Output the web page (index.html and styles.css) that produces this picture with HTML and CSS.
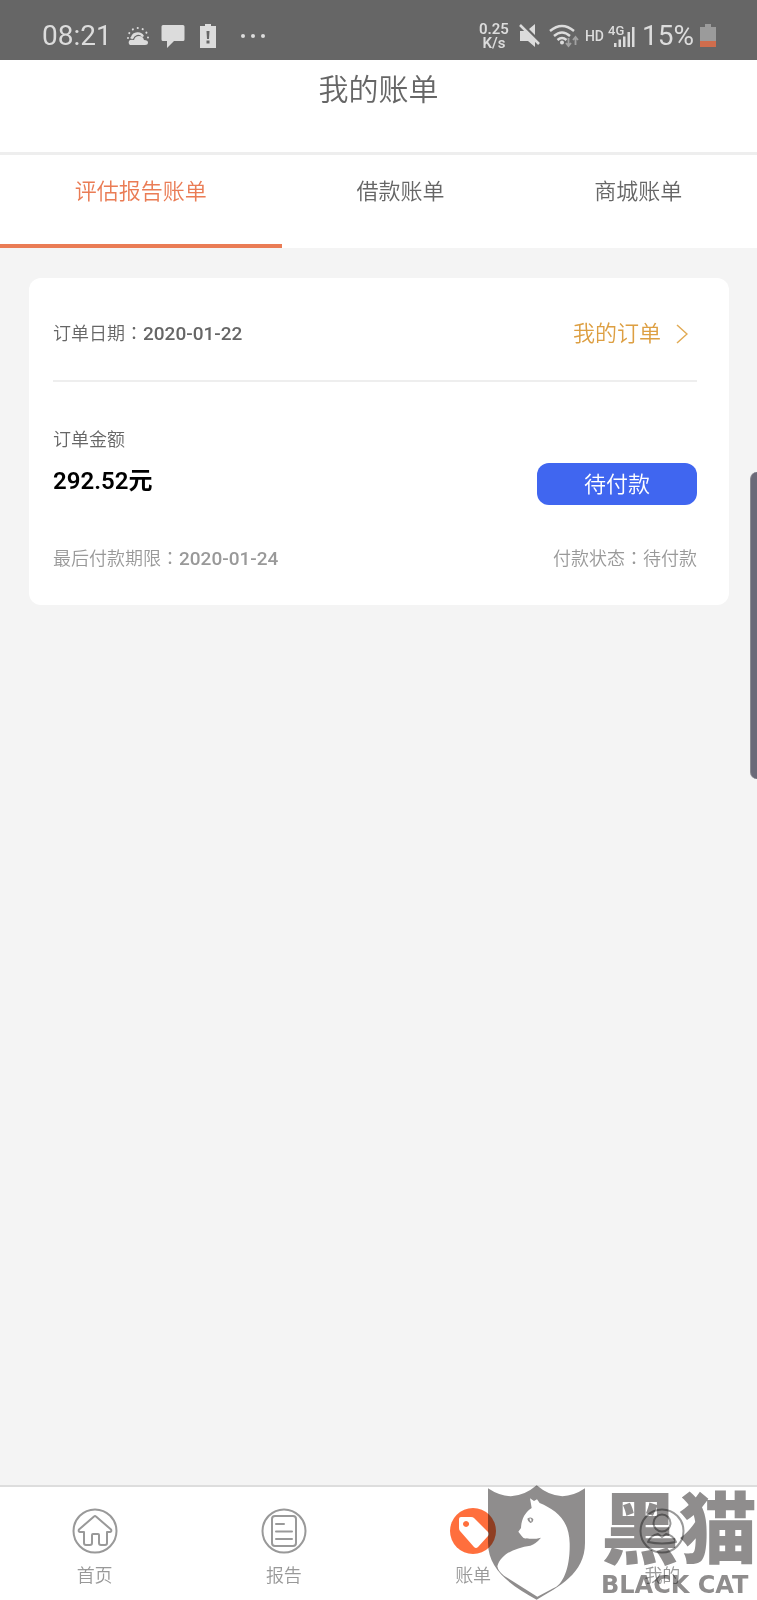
FILE: index.html
```html
<!DOCTYPE html>
<html lang="zh-CN">
<head>
    <meta charset="utf-8">
    <meta name="viewport" content="width=device-width, initial-scale=1">
    <title>我的账单</title>
    <link rel="stylesheet" href="styles.css">
</head>
<body>
    <div class="statusBar">
        <div class="statusLeft">
            <span class="clock">08:21</span>
            <svg class="weatherIcon" width="24" height="24" viewBox="0 0 24 24">
                <path fill="none" stroke="#dcdcdc" stroke-width="2" stroke-linecap="round" stroke-dasharray="0.1 5" d="M2 14a10 10 0 0 1 20 0"/>
                <path fill="#dcdcdc" d="M5 13a7 6.500 0 0 1 13-1q-1 1-2 1q-2-3-5-2t-4 4q-2 0-3-1z"/>
                <path fill="#dcdcdc" d="M4 21a3 3 0 0 1 0-5q2-.5 4 0q1-4 5-4t5 4q4 0 4 2.500t-3 2.500z"/>
            </svg>
            <svg class="chatIcon" width="24" height="24" viewBox="0 0 24 24">
                <path fill="#dcdcdc" d="M2 1h20q1.500 0 1.500 1.500v13q0 1.500-1.500 1.500h-9l-7 7v-7h-4q-1.500 0-1.500-1.500v-13q0-1.500 1.500-1.500z"/>
            </svg>
            <svg class="alertIcon" width="16" height="24" viewBox="0 0 16 24">
                <path fill="#dcdcdc" d="M5 0h6v2h5v22h-16v-22h5z"/>
                <path fill="#666" d="M6.500 7h3l-.5 8h-2zM6.500 16.500h3v3h-3z"/>
            </svg>
            <svg class="dotsIcon" width="26" height="6" viewBox="0 0 26 6">
                <g fill="#dcdcdc"><circle cx="3" cy="3" r="2"/><circle cx="13" cy="3" r="2"/><circle cx="23" cy="3" r="2"/></g>
            </svg>
        </div>
        <div class="statusRight">
            <span class="speed">0.25<br>K/s</span>
            <svg class="muteIcon" width="22" height="24" viewBox="0 0 22 24">
                <path fill="#dcdcdc" d="M1 7h5l10 10v6l-7-6h-8zM10 5l6-5v11z"/>
                <path stroke="#dcdcdc" stroke-width="2.500" d="M1 1l19 19"/>
            </svg>
            <svg class="wifiIcon" width="30" height="24" viewBox="0 0 30 24">
                <g fill="none" stroke="#dcdcdc" stroke-width="2.400">
                    <path d="M1 7q12-10 24 0M5 12q8-7 16 0M8.500 16q4.500-4 9 0"/>
                </g>
                <circle cx="13" cy="18.500" r="2" fill="#dcdcdc"/>
                <path fill="none" stroke="#a2a2a2" stroke-width="1.800" d="M19.500 14v8M17 19l2.500 3l2.500-3M26.500 21v-8M24 16l2.500-3l2.500 3"/>
            </svg>
            <span class="hd">HD</span>
            <svg class="signalIcon" width="28" height="24" viewBox="0 0 28 24">
                <path fill="#dcdcdc" d="M6 19h2.500v4h-2.500zM10.500 15.500h2.500v7.500h-2.500zM15 12.500h2.500v10.500h-2.500zM19.500 8h2.500v15h-2.500zM24 3h2.500v20h-2.500z"/>
                <text class="signalText" x="0" y="11">4G</text>
            </svg>
            <span class="percent">15%</span>
            <svg class="batteryIcon" width="16" height="24" viewBox="0 0 16 24">
                <path fill="#9b9b9b" d="M5 0h6v3h5v14h-16v-14h5z"/>
                <path fill="#cf6d4d" d="M0 17h16v6h-16z"/>
            </svg>
        </div>
    </div>

    <header class="header">
        <h1 class="title">我的账单</h1>
    </header>

    <nav class="tabs">
        <button class="tab active">评估报告账单</button>
        <button class="tab">借款账单</button>
        <button class="tab">商城账单</button>
    </nav>

    <main class="content">
        <section class="card">
            <div class="cardHead">
                <span>订单日期<span class="colon" lang="zh-TW">：</span><b>2020-01-22</b></span>
                <a class="orderLink" href="#">我的订单
                    <svg width="12" height="20" viewBox="0 0 12 20"><path fill="none" stroke="#e2ab55" stroke-width="1.500" d="M1 1l10 9l-10 9"/></svg>
                </a>
            </div>
            <div class="cardBody">
                <div>
                    <div class="amountLabel">订单金额</div>
                    <div class="amount">292.52元</div>
                </div>
                <button class="payButton">待付款</button>
            </div>
            <div class="cardFoot">
                <span>最后付款期限<span class="colon" lang="zh-TW">：</span><b>2020-01-24</b></span>
                <span>付款状态<span class="colon" lang="zh-TW">：</span>待付款</span>
            </div>
        </section>
    </main>

    <nav class="bottomNav">
        <a class="navItem" href="#">
            <svg width="46" height="46" viewBox="0 0 46 46" fill="none" stroke="#999" stroke-width="2" stroke-linejoin="round" stroke-linecap="round">
                <circle cx="23" cy="23" r="21.500"/>
                <path d="M22 8.500q1-1 2 0l15 13q1 2-1 2.500h-3v11q0 2-2 2h-4q-2 0-2-2v-8q0-1-1-1h-5q-1 0-1 1v8q0 2-2 2h-4q-2 0-2-2v-11h-4q-2-.5-1-2.500z"/>
            </svg>
            首页
        </a>
        <a class="navItem" href="#">
            <svg width="46" height="46" viewBox="0 0 46 46" fill="none" stroke="#999" stroke-width="2" stroke-linecap="round">
                <circle cx="23" cy="23" r="21.500"/>
                <rect x="11" y="8" width="24" height="30" rx="3"/>
                <path d="M15 16h8M15 23.500h16M15 31h16"/>
            </svg>
            报告
        </a>
        <a class="navItem" href="#">
            <svg width="46" height="46" viewBox="0 0 46 46">
                <circle cx="23" cy="23" r="23" fill="#ff6f3d"/>
                <path fill="#fff" fill-rule="evenodd" d="M11 9h10q2 0 3 1l14 14q2 2 0 4l-10 11q-2 2-4 0l-14-16q-1-1-1-3v-9q0-2 2-2zM16 13a3 3 0 1 0 .1 0z"/>
            </svg>
            账单
        </a>
        <a class="navItem" href="#">
            <svg width="46" height="46" viewBox="0 0 46 46" fill="none" stroke="#999" stroke-width="2" stroke-linejoin="round">
                <circle cx="23" cy="23" r="21.500"/>
                <circle cx="23" cy="15" r="8.500"/>
                <path d="M9 34q3-7 10-8l4 3l4-3q7 1 10 8q-14 3-28 0z"/>
            </svg>
            我的
        </a>
        <!-- Black Cat mark -->
        <div class="watermark">
            <svg width="97" height="115" viewBox="174 44 291 345">
                <path fill="#8f8d8d" d="M174 54Q250 105 320 45Q390 105 465 54V218C465 310 385 350 320 388C250 350 174 300 174 218z"/>
                <path fill="#fff" d="M300 84L312 92L321 87L329 98C375 118 417 145 419 218C421 290 400 342 370 354L322 379L222 316Q205 304 202 288C212 252 255 232 301 226Q318 220 333 202Q310 208 290 204Q282 207 275 197L265 184L273 173C274 150 282 128 305 113z"/>
                <path fill="#8f8d8d" d="M292 145q12-8 18 2q0 9-9 11q-7-3-9-13z"/>
                <path fill="#fff" d="M299 144q7 0 5 10q-6-1-5-10z"/>
            </svg>
            <div class="brand">
                <div class="brandName">黑猫</div>
                <div class="brandLatin">BLACK CAT</div>
            </div>
        </div>
    </nav>

    <div class="edgeHandle"></div>
</body>
</html>
```
FILE: styles.css
```css
* {
    box-sizing: border-box;
}
body {
    display: flex;
    flex-direction: column;
    min-height: 100vh;
    margin: 0;
    background-color: #f4f4f4;
    color: #666;
    font-family: Roboto, "Noto Sans CJK SC", sans-serif;
    font-weight: 350;
}
svg {
    display: block;
    flex: none;
}
button {
    border: none;
    font-family: inherit;
    font-weight: inherit;
    cursor: pointer;
}
a {
    text-decoration: none;
}
b {
    font-size: 19px;
    font-weight: 500;
    line-height: 1;
}

/* status bar */
.statusBar {
    display: flex;
    justify-content: space-between;
    height: 60px;
    padding: 12px 41px 0 42px;
    background-color: #666;
    color: #dcdcdc;
}
.statusLeft,
.statusRight {
    display: flex;
    align-items: center;
}
.clock,
.percent {
    font-size: 28px;
    font-weight: 400;
    line-height: 32px;
}
.weatherIcon {
    margin-left: 14px;
}
.chatIcon {
    margin-left: 11px;
}
.alertIcon {
    margin-left: 15px;
}
.dotsIcon {
    margin-left: 24px;
}
.speed {
    font-size: 15px;
    font-weight: 600;
    line-height: 14px;
    text-align: center;
}
.muteIcon {
    margin-left: 10px;
}
.wifiIcon {
    margin-left: 8px;
}
.hd {
    margin-left: 6px;
    font-size: 14px;
    font-weight: 500;
}
.signalIcon {
    margin: 0 6px 0 4px;
}
.signalText {
    fill: #dcdcdc;
    font-size: 13px;
    font-weight: 500;
}
.batteryIcon {
    margin-left: 6px;
}

/* header and tabs */
.header {
    height: 95px;
    padding-top: 10px;
    border-bottom: 3px solid #eee;
    background-color: #fff;
    text-align: center;
}
.title {
    margin: 0;
    font-size: 30px;
    font-weight: 350;
    line-height: 40px;
}
.tabs {
    display: flex;
    height: 93px;
    background-color: #fff;
}
.tab {
    flex: 1 1 auto;
    padding: 0 0 22px;
    border-bottom: 4px solid transparent;
    background-color: transparent;
    color: #666;
    font-size: 22px;
}
.tab.active {
    border-bottom-color: #ea7c55;
    color: #ea7c55;
}

/* bill card */
.content {
    flex: 1;
    padding: 30px 28px 30px 29px;
}
.card {
    padding: 40px 32px 34px 24px;
    border-radius: 12px;
    background-color: #fff;
    font-size: 18px;
    line-height: 24px;
}
.cardHead {
    display: flex;
    justify-content: space-between;
    align-items: center;
    padding-bottom: 30px;
    border-bottom: 2px solid #eee;
}
.colon {
    font-family: "Noto Sans CJK TC", sans-serif;
    line-height: 1;
}
.orderLink {
    display: flex;
    align-items: center;
    gap: 15px;
    padding-right: 9px;
    color: #dd9f42;
    font-size: 22px;
    line-height: 32px;
}
.cardBody {
    display: flex;
    justify-content: space-between;
    align-items: flex-end;
    margin: 46px 0 42px;
}
.amount {
    margin: 13px 0 8px;
    color: #000;
    font-size: 24px;
    font-weight: 600;
    line-height: 32px;
}
.payButton {
    width: 160px;
    height: 42px;
    padding: 0 0 4px;
    border-radius: 12px;
    background-color: #4066f0;
    color: #fff;
    font-size: 22px;
}
.cardFoot {
    display: flex;
    justify-content: space-between;
    color: #999;
}

/* bottom navigation */
.bottomNav {
    position: relative;
    display: flex;
    padding: 21px 0 12px;
    border-top: 2px solid #ddd;
    background-color: #fff;
}
.navItem {
    display: flex;
    flex: 1;
    flex-direction: column;
    align-items: center;
    gap: 10px;
    color: #999;
    font-size: 18px;
    line-height: 24px;
}
.watermark {
    position: absolute;
    right: 0;
    bottom: 0;
    display: flex;
    align-items: flex-end;
    gap: 16px;
    color: #8f8d8d;
    mix-blend-mode: multiply;
    pointer-events: none;
}
.brandName {
    font-size: 78px;
    font-weight: 900;
    line-height: 76px;
}
.brandLatin {
    font-family: "DejaVu Sans", sans-serif;
    font-size: 24px;
    font-weight: 700;
    line-height: 30px;
    white-space: nowrap;
}

/* edge panel handle */
.edgeHandle {
    position: fixed;
    top: 472px;
    right: 0;
    width: 7px;
    height: 307px;
    border-left: 1px solid #8c8c92;
    border-radius: 8px 0 0 8px;
    background-color: #6b6a78;
}
```
